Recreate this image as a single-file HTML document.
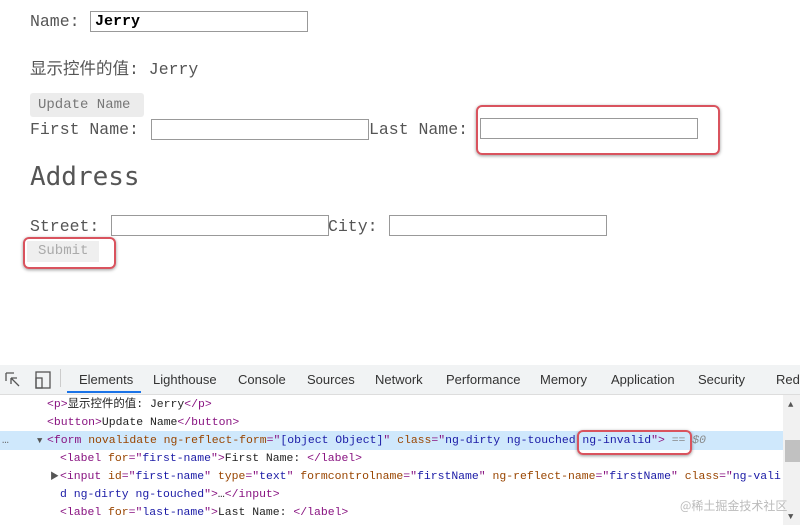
<!DOCTYPE html>
<html><head><meta charset="utf-8"><style>
body{margin:0;width:800px;height:525px;overflow:hidden;background:#fff;position:relative;font-family:"Liberation Mono","Noto Sans CJK SC",monospace;}
.a{position:absolute;white-space:nowrap}
.t{color:#555;font-size:16.5px}
.in{position:absolute;border:1px solid #999;background:#fff;height:21px;box-sizing:border-box}
.red{position:absolute;border:2px solid #d9535e;border-radius:6px;box-shadow:0 1px 3px rgba(0,0,0,.4)}
.tab{position:absolute;top:372px;font-family:"Liberation Sans",sans-serif;font-size:13px;color:#333}
.c{position:absolute;font-size:11.45px;color:#222;white-space:nowrap;font-family:"Liberation Mono","Noto Sans CJK SC",monospace;line-height:14px}
.tg{color:#881280}.at{color:#994500}.v{color:#1a1aa6}
</style></head><body>
<div class="a t" style="left:30px;top:12px">Name:</div>
<div class="in" style="left:90px;top:11px;width:218px;padding:1px 4px;font-size:15px;font-weight:bold;color:#000">Jerry</div>
<div class="a t" style="left:30px;top:55px">显示控件的值: Jerry</div>
<div class="a" style="left:30px;top:93px;width:114px;height:24px;background:#ececec;border-radius:3px"></div>
<div class="a" style="left:38px;top:97px;font-size:14px;color:#777">Update Name</div>
<div class="a t" style="left:30px;top:120px">First Name:</div>
<div class="in" style="left:151px;top:119px;width:218px"></div>
<div class="a t" style="left:369px;top:120px">Last Name:</div>
<div class="red" style="left:476px;top:105px;width:240px;height:46px"></div>
<div class="in" style="left:480px;top:118px;width:218px"></div>
<div class="a" style="left:30px;top:162px;font-family:'DejaVu Sans Mono',monospace;font-size:26px;color:#555">Address</div>
<div class="a t" style="left:30px;top:217px">Street:</div>
<div class="in" style="left:111px;top:215px;width:218px"></div>
<div class="a t" style="left:328px;top:217px">City:</div>
<div class="in" style="left:389px;top:215px;width:218px"></div>
<div class="red" style="left:23px;top:237px;width:89px;height:28px"></div>
<div class="a" style="left:27px;top:241px;width:72px;height:21px;background:#efefef"></div>
<div class="a" style="left:38px;top:243px;font-size:14px;color:#aaa">Submit</div>

<div class="a" style="left:0;top:365px;width:800px;height:29px;background:#f1f3f4;border-bottom:1px solid #ddd"></div>
<svg class="a" style="left:4px;top:371px" width="48" height="18"><path d="M2 2h8M2 2v8M7 7l8 8M7 7v6M7 7h6" stroke="#555" fill="none" stroke-width="1.3"/><rect x="32" y="1" width="14" height="16" fill="none" stroke="#555" stroke-width="1.3"/><rect x="32" y="7" width="6" height="10" fill="none" stroke="#555" stroke-width="1.3"/></svg>
<div class="a" style="left:60px;top:369px;width:1px;height:18px;background:#ccc"></div>
<div class="tab" style="left:79px">Elements</div>
<div class="a" style="left:67px;top:391px;width:74px;height:2px;background:#1a73e8"></div>
<div class="tab" style="left:153px">Lighthouse</div>
<div class="tab" style="left:238px">Console</div>
<div class="tab" style="left:307px">Sources</div>
<div class="tab" style="left:375px">Network</div>
<div class="tab" style="left:446px">Performance</div>
<div class="tab" style="left:540px">Memory</div>
<div class="tab" style="left:611px">Application</div>
<div class="tab" style="left:698px">Security</div>
<div class="tab" style="left:776px">Redu</div>

<div class="a" style="left:0;top:431px;width:783px;height:19px;background:#cfe8fc"></div>
<div class="a" style="left:783px;top:395px;width:17px;height:130px;background:#f1f1f1"></div>
<div class="a" style="left:785px;top:440px;width:15px;height:22px;background:#c1c1c1"></div>
<div class="a" style="left:788px;top:400px;font-size:9px;color:#555">▲</div>
<div class="a" style="left:788px;top:512px;font-size:9px;color:#555">▼</div>
<div class="c" style="left:47px;top:398px"><span class="tg">&lt;p&gt;</span>显示控件的值: Jerry<span class="tg">&lt;/p&gt;</span></div>
<div class="c" style="left:47px;top:416px"><span class="tg">&lt;button&gt;</span>Update Name<span class="tg">&lt;/button&gt;</span></div>
<div class="c" style="left:2px;top:434px;color:#666">…</div>
<div class="c" style="left:37px;top:434px;font-size:9px;color:#555">▼</div>
<div class="c" style="left:47px;top:434px"><span class="tg">&lt;form </span><span class="at">novalidate ng-reflect-form</span><span class="tg">="</span><span class="v">[object Object]</span><span class="tg">" </span><span class="at">class</span><span class="tg">="</span><span class="v">ng-dirty ng-touched ng-invalid</span><span class="tg">"&gt;</span> <span style="color:#888">== <i>$0</i></span></div>
<div class="red" style="left:577px;top:430px;width:111px;height:21px"></div>
<div class="c" style="left:60px;top:452px"><span class="tg">&lt;label </span><span class="at">for</span><span class="tg">="</span><span class="v">first-name</span><span class="tg">"&gt;</span>First Name: <span class="tg">&lt;/label&gt;</span></div>
<div class="c" style="left:50px;top:470px;font-size:9px;color:#555">▶</div>
<div class="c" style="left:60px;top:470px"><span class="tg">&lt;input </span><span class="at">id</span><span class="tg">="</span><span class="v">first-name</span><span class="tg">" </span><span class="at">type</span><span class="tg">="</span><span class="v">text</span><span class="tg">" </span><span class="at">formcontrolname</span><span class="tg">="</span><span class="v">firstName</span><span class="tg">" </span><span class="at">ng-reflect-name</span><span class="tg">="</span><span class="v">firstName</span><span class="tg">" </span><span class="at">class</span><span class="tg">="</span><span class="v">ng-vali</span></div>
<div class="c" style="left:60px;top:488px"><span class="v">d ng-dirty ng-touched</span><span class="tg">"&gt;</span>…<span class="tg">&lt;/input&gt;</span></div>
<div class="c" style="left:60px;top:506px"><span class="tg">&lt;label </span><span class="at">for</span><span class="tg">="</span><span class="v">last-name</span><span class="tg">"&gt;</span>Last Name: <span class="tg">&lt;/label&gt;</span></div>
<div class="a" style="left:680px;top:497px;font-family:'Noto Sans CJK SC',sans-serif;font-size:12px;color:#bbb">@稀土掘金技术社区</div>
</body></html>
